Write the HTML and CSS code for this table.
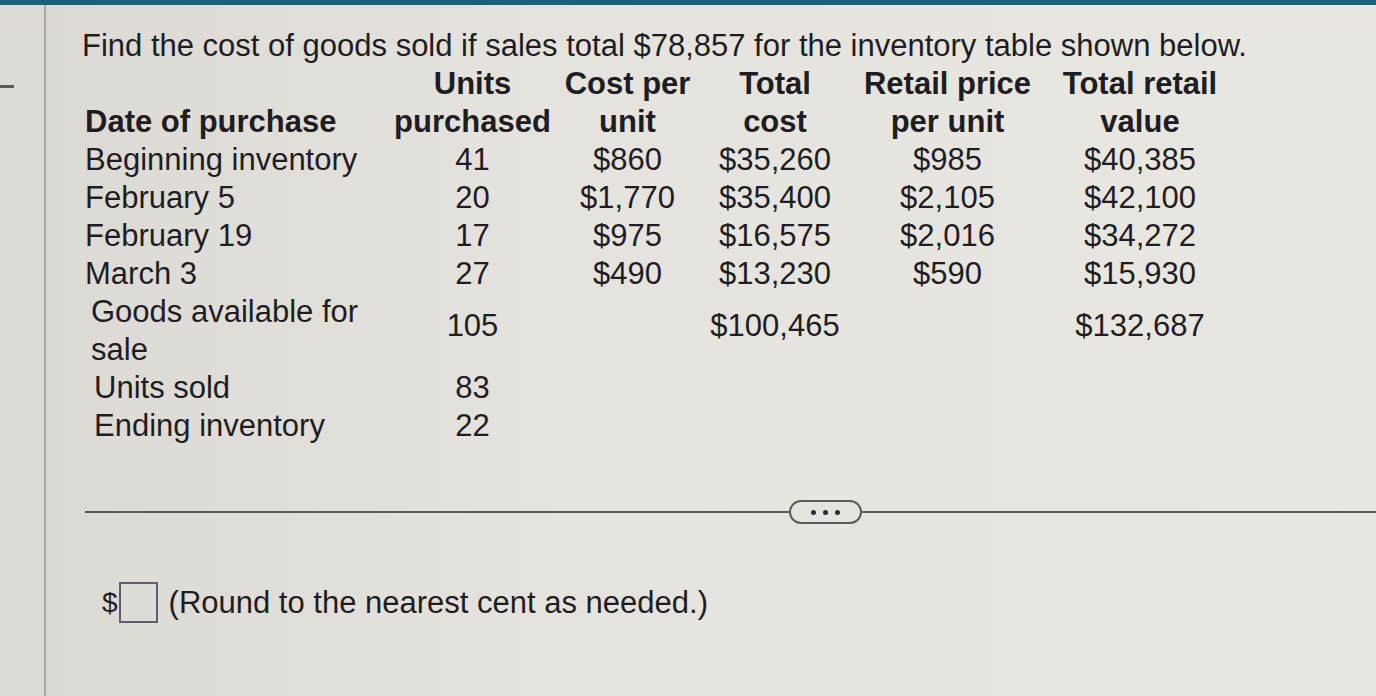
FILE: index.html
```html
<!DOCTYPE html>
<html>
<head>
<meta charset="utf-8">
<link rel="stylesheet" href="styles.css">
</head>
<body>
<div class="topbar"></div>
<div class="screen">
  <div class="gutter"><span class="dash"></span></div>
  <div class="main">
    <p class="question">Find the cost of goods sold if sales total $78,857 for the inventory table shown below.</p>
    <div class="table">
      <div class="h c1"></div>
      <div class="h c">Units</div>
      <div class="h c">Cost per</div>
      <div class="h c">Total</div>
      <div class="h c">Retail price</div>
      <div class="h c">Total retail</div>

      <div class="h c1">Date of purchase</div>
      <div class="h c">purchased</div>
      <div class="h c">unit</div>
      <div class="h c">cost</div>
      <div class="h c">per unit</div>
      <div class="h c">value</div>

      <div class="c1">Beginning inventory</div>
      <div class="c">41</div><div class="c">$860</div><div class="c">$35,260</div><div class="c">$985</div><div class="c">$40,385</div>

      <div class="c1">February 5</div>
      <div class="c">20</div><div class="c">$1,770</div><div class="c">$35,400</div><div class="c">$2,105</div><div class="c">$42,100</div>

      <div class="c1">February 19</div>
      <div class="c">17</div><div class="c">$975</div><div class="c">$16,575</div><div class="c">$2,016</div><div class="c">$34,272</div>

      <div class="c1">March 3</div>
      <div class="c">27</div><div class="c">$490</div><div class="c">$13,230</div><div class="c">$590</div><div class="c">$15,930</div>

      <div class="c1 wrap">Goods available for sale</div>
      <div class="c mid">105</div><div class="c mid"></div><div class="c mid">$100,465</div><div class="c mid"></div><div class="c mid">$132,687</div>

      <div class="c1 late">Units sold</div>
      <div class="c">83</div><div class="c"></div><div class="c"></div><div class="c"></div><div class="c"></div>

      <div class="c1 late">Ending inventory</div>
      <div class="c">22</div><div class="c"></div><div class="c"></div><div class="c"></div><div class="c"></div>
    </div>

    <div class="divider">
      <span class="line"></span>
      <span class="pill"><i></i><i></i><i></i></span>
      <span class="line"></span>
    </div>

    <div class="answer">
      <span class="dollar">$</span>
      <span class="box"></span>
      <span class="note">(Round to the nearest cent as needed.)</span>
    </div>
  </div>
</div>
</body>
</html>
```

FILE: styles.css
```css
* { box-sizing: border-box; }
html, body {
  margin: 0;
  padding: 0;
  width: 1376px;
  height: 696px;
  overflow: hidden;
}
body {
  font-family: "Liberation Sans", Arial, sans-serif;
  color: #1e1e22;
  background: #e3e0db;
}
.topbar {
  height: 5px;
  background: #1d6079;
}
.screen {
  display: flex;
  height: 691px;
  background: linear-gradient(90deg, #dcd9d4 0%, #e6e3de 40%, #e9e7e2 100%);
}
.gutter {
  width: 46px;
  flex: none;
  border-right: 2px solid #a9a7a4;
  padding-top: 80px;
  background: #dedbd6;
}
.dash {
  display: block;
  width: 14px;
  height: 3px;
  background: #5c5b5c;
}
.main {
  flex: 1;
  padding-left: 36px;
}
.question {
  margin: 22px 0 0 0;
  font-size: 31px;
  line-height: 38px;
}
.table {
  display: grid;
  grid-template-columns: 300px 175px 135px 160px 185px 200px;
  grid-auto-rows: 38px;
  font-size: 31px;
  line-height: 38px;
  margin-left: 3px;
}
.h { font-weight: bold; }
.c { text-align: center; white-space: nowrap; }
.c1 { text-align: left; padding-left: 0; white-space: nowrap; }
.wrap {
  grid-row: span 2;
  white-space: normal;
  padding-right: 0;
  padding-left: 6px;
}
.late { padding-left: 9px; }
.mid {
  grid-row: span 2;
  padding-top: 14px;
}
.divider {
  display: flex;
  align-items: center;
  margin-top: 55px;
  margin-left: 3px;
  height: 24px;
}
.line {
  flex: 1;
  height: 2px;
  background: #5a5a5c;
}
.divider .line:first-child { flex: none; width: 704px; }
.pill {
  width: 73px;
  height: 24px;
  border: 2px solid #5a5a5c;
  border-radius: 12px;
  display: flex;
  align-items: center;
  justify-content: center;
  gap: 7px;
  background: #e6e3de;
}
.pill i {
  display: block;
  width: 5px;
  height: 5px;
  border-radius: 50%;
  background: #2a2a30;
}
.answer {
  display: flex;
  align-items: center;
  margin-top: 58px;
  margin-left: 20px;
  font-size: 31px;
  line-height: 38px;
}
.dollar {
  font-size: 28px;
  margin-right: 1px;
}
.box {
  width: 39px;
  height: 41px;
  border: 2px solid #5d5f70;
  margin-right: 11px;
}
```
